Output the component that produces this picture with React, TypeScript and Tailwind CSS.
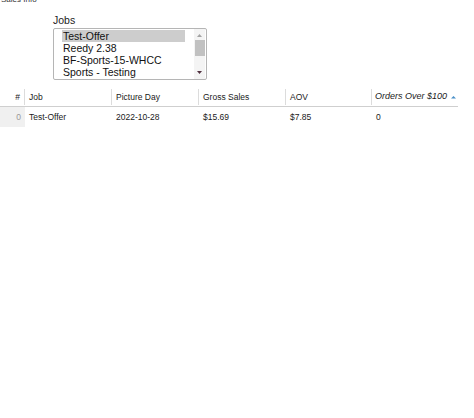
const jobs = ['Test-Offer', 'Reedy 2.38', 'BF-Sports-15-WHCC', 'Sports - Testing'];

const columns = [
  { label: 'Job', width: 'w-[87px]' },
  { label: 'Picture Day', width: 'w-[87px]' },
  { label: 'Gross Sales', width: 'w-[87px]' },
  { label: 'AOV', width: 'w-[86px]' },
];

const rows = [{ job: 'Test-Offer', day: '2022-10-28', gross: '$15.69', aov: '$7.85', over: '0' }];

export default function App() {
  return (
    <div className="w-[474px] h-[418px] bg-white text-[#222] font-['Liberation_Sans',Arial,sans-serif]">
      {/* heading scrolled mostly out of view */}
      <div className="h-[4px] overflow-hidden flex items-end">
        <span className="text-[8px] leading-[8px] pl-[1px] text-[#333]">Sales Info</span>
      </div>

      <div className="pl-[53px] pt-[10px]">
        <div className="text-[10.5px] leading-[12px] text-[#222]">Jobs</div>
        <div className="mt-[2px] w-[154px] h-[52px] border border-[#b5b5b5] rounded-[2px] flex">
          <ul className="flex-1 pl-[8px] pr-[9px] pt-[1px] text-[10.5px] leading-[12px] text-[#111]">
            {jobs.map((job, i) => (
              <li key={job} className={`pl-[1px] whitespace-nowrap ${i === 0 ? 'bg-[#cdcdcd]' : ''}`}>
                {job}
              </li>
            ))}
          </ul>
          <div className="w-[11px] mr-[1px] flex flex-col items-center bg-[#f4f4f4]">
            <svg width="7" height="10" viewBox="0 0 7 10" className="mt-[1px]">
              <path d="M1 7 L3.5 4 L6 7 Z" fill="#a3a3a3" />
            </svg>
            <div className="w-[10px] h-[16px] bg-[#c1c1c1]" />
            <div className="flex-1" />
            <svg width="7" height="10" viewBox="0 0 7 10" className="mb-[1px]">
              <path d="M1 3 L3.5 6 L6 3 Z" fill="#50303f" />
            </svg>
          </div>
        </div>
      </div>

      <div className="mt-[8px] w-[458px] text-[8.5px] text-[#1a1a1a]">
        <div className="flex h-[19px] border-b border-[#cfcfcf]">
          <div className="w-[25px] border-r border-[#dcdcdc] flex items-center justify-end pr-[4px] mt-[1px] mb-[1px]">#</div>
          {columns.map((c) => (
            <div key={c.label} className={`${c.width} border-r border-[#dcdcdc] flex items-center pl-[4px] mt-[1px] mb-[1px]`}>
              {c.label}
            </div>
          ))}
          <div className="flex-1 flex items-center pl-[3px] italic gap-[3px] whitespace-nowrap">
            <span className="text-[9px]">Orders Over $100</span>
            <svg width="7" height="6" viewBox="0 0 7 6" className="shrink-0">
              <path d="M1 4.5 L3.5 2 L6 4.5 Z" fill="#4a90c8" />
            </svg>
          </div>
        </div>
        {rows.map((r, i) => (
          <div key={i} className="flex h-[20px]">
            <div className="w-[25px] bg-[#f0f0f0] flex items-center justify-end pr-[4px] text-[#999]">{i}</div>
            <div className="w-[87px] flex items-center pl-[4px]">{r.job}</div>
            <div className="w-[87px] flex items-center pl-[4px]">{r.day}</div>
            <div className="w-[87px] flex items-center pl-[4px]">{r.gross}</div>
            <div className="w-[86px] flex items-center pl-[4px]">{r.aov}</div>
            <div className="flex-1 flex items-center pl-[4px]">{r.over}</div>
          </div>
        ))}
      </div>
    </div>
  );
}
